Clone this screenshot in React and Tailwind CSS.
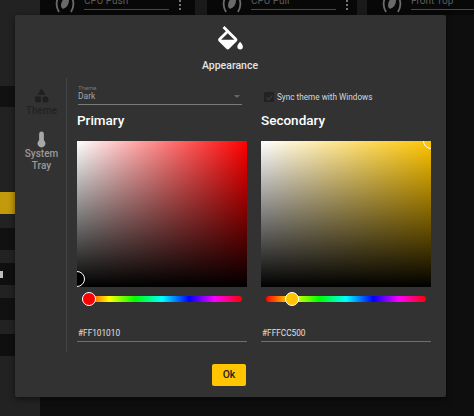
import React from "react";

const FONT = "font-['Roboto',sans-serif]";

function Fan() {
  return (
    <svg width="20" height="20" viewBox="0 0 20 20" fill="none" className="shrink-0">
      <path d="M4 2 C1 7 1 13 4 18 M16 2 C19 7 19 13 16 18" stroke="#6a6a6a" strokeWidth="1.8" />
      <ellipse cx="10" cy="9" rx="3.4" ry="6" transform="rotate(25 10 9)" fill="#6a6a6a" />
    </svg>
  );
}

function Card({ title, width, ml, lineW, dotsGap }) {
  return (
    <div className={`${width} ${ml} h-[15px] overflow-hidden bg-[#080808] flex items-start`}>
      <div className="flex items-start pl-[15px] -mt-[6px]">
        <Fan />
        <div className={`ml-[9px] ${lineW} h-[16px] border-b border-[#4a4a4a] flex items-end`}>
          <span className="text-[10px] leading-[11px] text-[#5c5c5c] pb-[3px]">{title}</span>
        </div>
        <div className={`${dotsGap} mt-[6px] flex flex-col gap-[2px]`}>
          <div className="w-[2px] h-[2px] bg-[#777]" />
          <div className="w-[2px] h-[2px] bg-[#777]" />
          <div className="w-[2px] h-[2px] bg-[#777]" />
        </div>
      </div>
    </div>
  );
}

function Picker({ title, hue, hex, thumb, thumbOffset, knobClass }) {
  return (
    <div className="w-[170px] flex flex-col">
      <div className="h-[22px] text-[13.5px] leading-[22px] font-medium text-white">{title}</div>
      <div className={`relative mt-[10px] h-[146px] overflow-hidden ${hue}`}>
        <div className="absolute inset-0 bg-[linear-gradient(to_top,#000,transparent)]" />
        <div className={`absolute w-[16px] h-[16px] rounded-full border-[1.5px] border-white ${knobClass}`} />
      </div>
      <div className="relative mx-[5px] mt-[9px] h-[6px] rounded-full bg-[linear-gradient(to_right,#f00_0%,#ff0_17%,#0f0_33%,#0ff_50%,#00f_67%,#f0f_83%,#f00_100%)]">
        <div className={`absolute top-[-4px] w-[14px] h-[14px] rounded-full border-[1.5px] border-white ${thumb} ${thumbOffset}`} />
      </div>
      <div className="mt-[25px] h-[15px] border-b border-[#6f6f6f] text-[8.25px] leading-[12px] text-[#e0e0e0] pl-[1px]">
        {hex}
      </div>
    </div>
  );
}

export default function App() {
  return (
    <div className={`relative w-[474px] h-[416px] overflow-hidden flex bg-[#0e0e0e] ${FONT}`}>
      <div className="w-[40px] h-full bg-[#222222] flex flex-col shrink-0">
        <div className="mt-[86px] h-[21px] bg-[#111111]" />
        <div className="mt-[85px] h-[22px] bg-[#c29a0c]" />
        <div className="mt-[14px] h-[22px] bg-[#111111]" />
        <div className="mt-[13px] h-[22px] bg-[#0f0f0f] flex items-center">
          <div className="w-[3px] h-[7px] bg-[#bdbdbd]" />
        </div>
        <div className="mt-[13px] h-[22px] bg-[#111111]" />
        <div className="mt-[14px] h-[22px] bg-[#0f0f0f]" />
      </div>

      <div className="flex-1 flex flex-col">
        <div className="flex h-[15px] bg-[#1a1a1a]">
          <Card title="CPU Push" width="w-[155px]" ml="" lineW="w-[85px]" dotsGap="ml-[10px]" />
          <Card title="CPU Pull" width="w-[150px]" ml="ml-[12px]" lineW="w-[85px]" dotsGap="ml-[10px]" />
          <Card title="Front Top" width="flex-1" ml="ml-[10px]" lineW="w-[90px]" dotsGap="ml-[10px]" />
        </div>
        <div className="self-end w-[29px] flex-1 flex flex-col overflow-hidden">
          <div className="h-[21px] bg-[#0c0c0c] border-b border-[#333]" />
          <div className="h-[29px] bg-[#0a0a0a] text-[10px] leading-[32px] text-[#5f5f5f] pl-[8px] whitespace-nowrap">748.8</div>
          <div className="h-[133px] bg-[#101010]" />
          <div className="h-[25px] bg-[#0a0a0a] border-b border-[#444] text-[10px] leading-[34px] text-[#666] whitespace-nowrap">use</div>
          <div className="h-[31px] bg-[#0a0a0a] border-b border-[#444] text-[10px] leading-[45px] text-[#666] whitespace-nowrap">age - Inte</div>
          <div className="h-[30px] bg-[#0a0a0a]" />
          <div className="flex-1 bg-[#141414]" />
        </div>
      </div>

      <div className="absolute left-[14.5px] top-[15px] w-[431px] h-[382px] bg-[#323232] rounded-[2px] shadow-[0_2px_6px_rgba(0,0,0,0.5)] flex flex-col">
        <div className="flex flex-col items-center h-[63px] pt-[11px]">
          <svg width="33" height="33" viewBox="0 0 24 24" fill="#ffffff" className="-mb-[8px]">
            <path d="M19,11.5C19,11.5 17,13.67 17,15A2,2 0 0,0 19,17A2,2 0 0,0 21,15C21,13.67 19,11.5 19,11.5M5.21,10L10,5.21L14.79,10M16.56,8.94L7.62,0L6.21,1.41L8.59,3.79L3.44,8.94C2.85,9.5 2.85,10.47 3.44,11.06L8.94,16.56C9.23,16.85 9.62,17 10,17C10.38,17 10.77,16.85 11.06,16.56L16.56,11.06C17.15,10.47 17.15,9.5 16.56,8.94Z" />
          </svg>
          <div className="mt-[8px] text-[10.5px] leading-[14px] font-medium text-[#e4e4e4]">Appearance</div>
        </div>

        <div className="flex h-[274px]">
          <div className="w-[52px] border-r border-[#454545] flex flex-col items-center pt-[9px] pl-[3px]">
            <svg width="17" height="17" viewBox="0 0 24 24" fill="#1f1f1f">
              <path d="M11,13.5V21.5H3V13.5H11M12,2L17.5,11H6.5L12,2M17.5,13C20,13 22,15 22,17.5C22,20 20,22 17.5,22C15,22 13,20 13,17.5C13,15 15,13 17.5,13Z" />
            </svg>
            <div className="text-[10px] leading-[13px] font-medium text-[#222]">Theme</div>
            <svg width="19" height="19" viewBox="0 0 24 24" fill="#a8a8a8" className="mt-[13px]">
              <path d="M15 13V5A3 3 0 0 0 9 5V13A5 5 0 1 0 15 13Z" />
            </svg>
            <div className="-mt-[1px] text-[10px] leading-[12px] font-medium text-[#9a9a9a] text-center">System<br />Tray</div>
          </div>

          <div className="pl-[10.5px] flex gap-[14px]">
            <div className="flex flex-col">
              <div className="w-[164px] ml-[1px] h-[21px] mt-[6px] border-b border-[#7a7a7a] relative">
                <div className="text-[6px] leading-[7px] text-[#777]">Theme</div>
                <div className="text-[8.5px] leading-[11px] text-[#a5a5a5]">Dark</div>
                <div className="absolute right-[2px] top-[11px] w-0 h-0 border-x-[3px] border-x-transparent border-t-[3px] border-t-[#666]" />
              </div>
              <div className="mt-[4px]">
                <Picker
                  title="Primary"
                  hue="bg-[linear-gradient(to_right,#fff,#f00)]"
                  hex="#FF101010"
                  thumb="bg-[#f00]"
                  thumbOffset="left-0"
                  knobClass="left-[-8px] bottom-0 bg-black"
                />
              </div>
            </div>
            <div className="flex flex-col">
              <div className="h-[21px] mt-[6px] flex items-center pl-[3px] pt-[5px]">
                <div className="w-[10px] h-[10px] rounded-[1px] bg-[#222] flex items-center justify-center">
                  <svg width="9" height="9" viewBox="0 0 10 10" fill="none">
                    <path d="M1.5 5 L4 7.5 L8.5 2.5" stroke="#3a3a3a" strokeWidth="1.4" />
                  </svg>
                </div>
                <span className="ml-[3px] text-[8.2px] leading-[12px] text-[#d8d8d8] whitespace-nowrap">Sync theme with Windows</span>
              </div>
              <div className="mt-[4px]">
                <Picker
                  title="Secondary"
                  hue="bg-[linear-gradient(to_right,#fff,#ffc500)]"
                  hex="#FFFCC500"
                  thumb="bg-[#ffc500]"
                  thumbOffset="left-[19px]"
                  knobClass="right-[-8px] top-[-8px] bg-[#ffc500]"
                />
              </div>
            </div>
          </div>
        </div>

        <div className="flex justify-end pr-[199.5px] pt-[12px]">
          <button className="w-[34px] h-[22px] rounded-[2px] bg-[#ffc500] text-[10.5px] font-medium text-[#222]">Ok</button>
        </div>
      </div>
    </div>
  );
}
